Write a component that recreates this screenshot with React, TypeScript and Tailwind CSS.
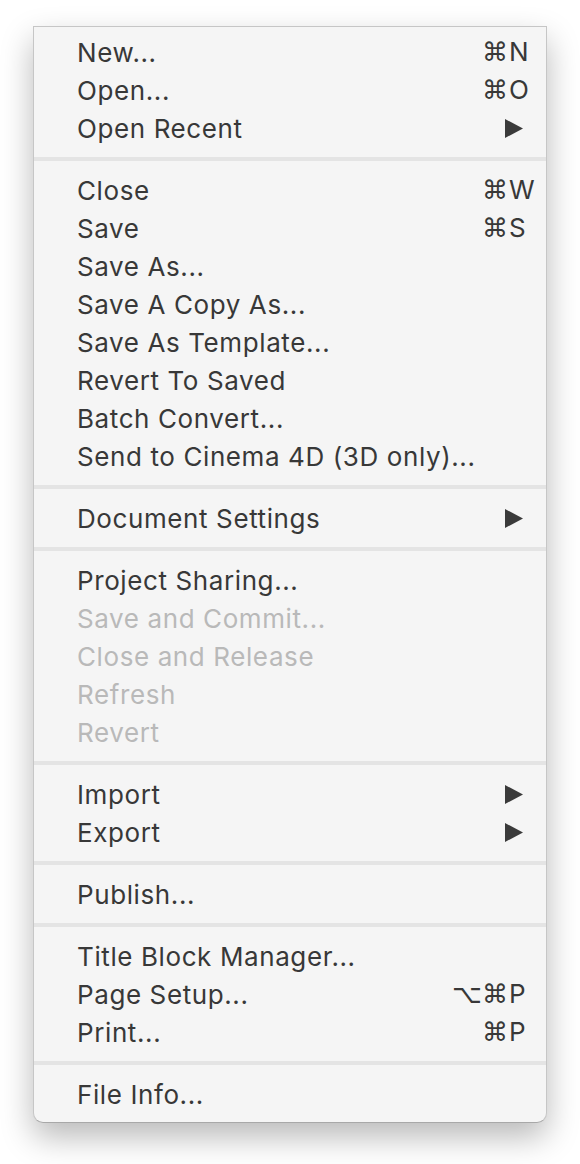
type Item = {
  label: string;
  mod?: string;
  keyName?: string;
  submenu?: boolean;
  disabled?: boolean;
};

const groups: Item[][] = [
  [
    { label: 'New...', mod: '⌘', keyName: 'N' },
    { label: 'Open...', mod: '⌘', keyName: 'O' },
    { label: 'Open Recent', submenu: true },
  ],
  [
    { label: 'Close', mod: '⌘', keyName: 'W' },
    { label: 'Save', mod: '⌘', keyName: 'S' },
    { label: 'Save As...' },
    { label: 'Save A Copy As...' },
    { label: 'Save As Template...' },
    { label: 'Revert To Saved' },
    { label: 'Batch Convert...' },
    { label: 'Send to Cinema 4D (3D only)...' },
  ],
  [{ label: 'Document Settings', submenu: true }],
  [
    { label: 'Project Sharing...' },
    { label: 'Save and Commit...', disabled: true },
    { label: 'Close and Release', disabled: true },
    { label: 'Refresh', disabled: true },
    { label: 'Revert', disabled: true },
  ],
  [
    { label: 'Import', submenu: true },
    { label: 'Export', submenu: true },
  ],
  [{ label: 'Publish...' }],
  [
    { label: 'Title Block Manager...' },
    { label: 'Page Setup...', mod: '⌥⌘', keyName: 'P' },
    { label: 'Print...', mod: '⌘', keyName: 'P' },
  ],
  [{ label: 'File Info...' }],
];

function MenuRow({ item }: { item: Item }) {
  return (
    <div
      className={
        'flex h-[38px] items-center pl-[43px] ' +
        (item.disabled ? 'text-[#b9b9b9]' : 'text-[#383838]')
      }
    >
      <span className="flex-1 whitespace-nowrap">{item.label}</span>
      {item.keyName && (
        <div className="flex shrink-0 items-baseline tracking-normal">
          <span className="text-right font-['DejaVu_Sans',sans-serif] text-[26px]">{item.mod}</span>
          <span className="w-[38px] pl-[1px]">{item.keyName}</span>
        </div>
      )}
      {item.submenu && (
        <svg className="mr-[23px] shrink-0" width="18" height="19" viewBox="0 0 18 19">
          <path d="M0 0 L18 9.5 L0 19 Z" fill="#3a3a3a" />
        </svg>
      )}
    </div>
  );
}

export default function App() {
  return (
    <div className="min-h-[1164px] w-[580px] bg-white pt-[26px] pl-[33px]">
      <div className="w-[514px] overflow-hidden rounded-b-[10px] border border-[#c6c6c6] border-b-[#a8a8a8] bg-[#f5f5f5] pt-[6px] pb-[9px] font-['Inter','Liberation_Sans',sans-serif] text-[26px] tracking-[0.6px] shadow-[0_14px_32px_rgba(0,0,0,0.28)]">
        {groups.map((group, gi) => (
          <div key={gi}>
            {gi > 0 && (
              <div className="flex h-[24px] items-center">
                <div className="h-[4px] w-full bg-[#e4e4e4]" />
              </div>
            )}
            {group.map((item) => (
              <MenuRow key={item.label} item={item} />
            ))}
          </div>
        ))}
      </div>
    </div>
  );
}
